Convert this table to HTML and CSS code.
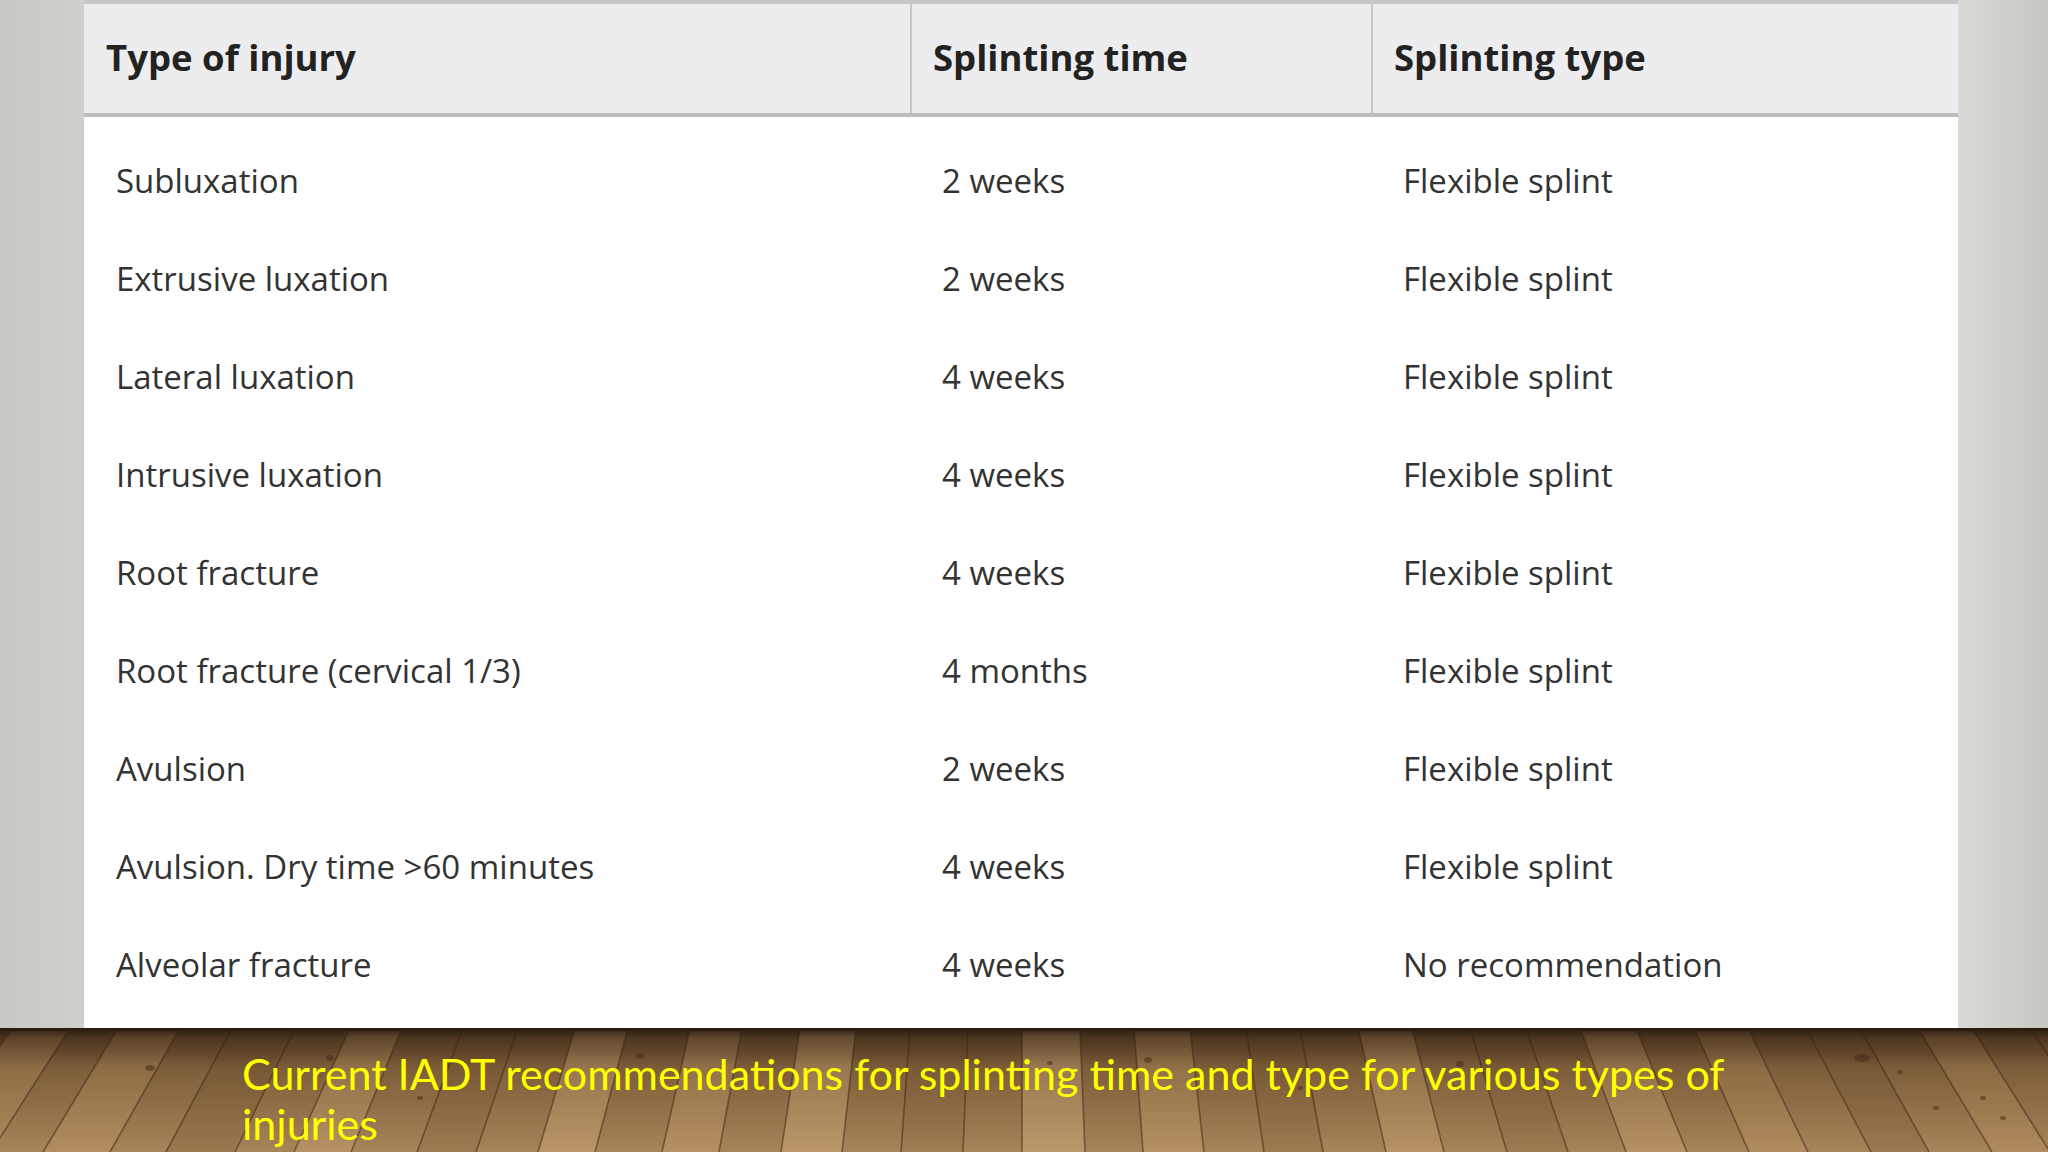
FILE: index.html
```html
<!DOCTYPE html>
<html lang="en">
<head>
<meta charset="utf-8">
<title>IADT splinting recommendations</title>
<link rel="stylesheet" href="styles.css">
</head>
<body>
<main class="slide">
  <section class="stage">
    <div class="table">
      <div class="thead">
        <div class="th">Type of injury</div>
        <div class="th">Splinting time</div>
        <div class="th">Splinting type</div>
      </div>
      <div class="tbody">
        <div class="tr"><div class="td">Subluxation</div><div class="td">2 weeks</div><div class="td">Flexible splint</div></div>
        <div class="tr"><div class="td">Extrusive luxation</div><div class="td">2 weeks</div><div class="td">Flexible splint</div></div>
        <div class="tr"><div class="td">Lateral luxation</div><div class="td">4 weeks</div><div class="td">Flexible splint</div></div>
        <div class="tr"><div class="td">Intrusive luxation</div><div class="td">4 weeks</div><div class="td">Flexible splint</div></div>
        <div class="tr"><div class="td">Root fracture</div><div class="td">4 weeks</div><div class="td">Flexible splint</div></div>
        <div class="tr"><div class="td">Root fracture (cervical 1/3)</div><div class="td">4 months</div><div class="td">Flexible splint</div></div>
        <div class="tr"><div class="td">Avulsion</div><div class="td">2 weeks</div><div class="td">Flexible splint</div></div>
        <div class="tr"><div class="td">Avulsion. Dry time &gt;60 minutes</div><div class="td">4 weeks</div><div class="td">Flexible splint</div></div>
        <div class="tr"><div class="td">Alveolar fracture</div><div class="td">4 weeks</div><div class="td">No recommendation</div></div>
      </div>
    </div>
  </section>
  <footer class="floor">
    <svg class="planks" viewBox="0 0 2048 124" preserveAspectRatio="none" aria-hidden="true">
      <defs>
        <linearGradient id="shade" x1="0" y1="0" x2="0" y2="1">
          <stop offset="0" stop-color="#1e140a" stop-opacity="0.85"/>
          <stop offset="0.08" stop-color="#2a1c10" stop-opacity="0.45"/>
          <stop offset="0.3" stop-color="#2a1c10" stop-opacity="0.12"/>
          <stop offset="1" stop-color="#2a1c10" stop-opacity="0"/>
        </linearGradient>
      </defs>
      <g class="alt">
        <polygon points="12,0 70,0 -9,124 -72,124" fill="#c9a06a" opacity="0.3"/>
        <polygon points="118,0 180,0 110,124 43,124" fill="#d2ab74" opacity="0.25"/>
        <polygon points="232,0 295,0 235,124 166,124" fill="#6a4a2a" opacity="0.2"/>
        <polygon points="350,0 402,0 351,124 294,124" fill="#d8b27c" opacity="0.3"/>
        <polygon points="463,0 518,0 476,124 417,124" fill="#6a4a2a" opacity="0.15"/>
        <polygon points="575,0 628,0 595,124 538,124" fill="#dcb884" opacity="0.35"/>
        <polygon points="690,0 742,0 719,124 662,124" fill="#d6b07a" opacity="0.3"/>
        <polygon points="800,0 856,0 842,124 781,124" fill="#e0bd88" opacity="0.35"/>
        <polygon points="910,0 968,0 963,124 901,124" fill="#6a4a2a" opacity="0.12"/>
        <polygon points="1022,0 1080,0 1085,124 1022,124" fill="#e2c08c" opacity="0.35"/>
        <polygon points="1134,0 1190,0 1204,124 1143,124" fill="#d4ae78" opacity="0.3"/>
        <polygon points="1246,0 1300,0 1323,124 1264,124" fill="#6a4a2a" opacity="0.15"/>
        <polygon points="1358,0 1412,0 1444,124 1386,124" fill="#dab680" opacity="0.3"/>
        <polygon points="1470,0 1526,0 1568,124 1507,124" fill="#6a4a2a" opacity="0.15"/>
        <polygon points="1580,0 1636,0 1687,124 1626,124" fill="#d6b07a" opacity="0.3"/>
        <polygon points="1694,0 1748,0 1808,124 1749,124" fill="#caa26c" opacity="0.25"/>
        <polygon points="1806,0 1860,0 1929,124 1871,124" fill="#6a4a2a" opacity="0.18"/>
        <polygon points="1918,0 1972,0 2050,124 1992,124" fill="#c9a06a" opacity="0.25"/>
      </g>
      <g class="seams" stroke="#3f2a16" stroke-width="1.6" stroke-opacity="0.55">
        <line x1="-60" y1="0" x2="-150" y2="124"/>
        <line x1="12" y1="0" x2="-72" y2="124"/>
        <line x1="70" y1="0" x2="-9" y2="124"/>
        <line x1="118" y1="0" x2="43" y2="124"/>
        <line x1="180" y1="0" x2="110" y2="124"/>
        <line x1="232" y1="0" x2="166" y2="124"/>
        <line x1="295" y1="0" x2="235" y2="124"/>
        <line x1="350" y1="0" x2="294" y2="124"/>
        <line x1="402" y1="0" x2="351" y2="124"/>
        <line x1="463" y1="0" x2="417" y2="124"/>
        <line x1="518" y1="0" x2="476" y2="124"/>
        <line x1="575" y1="0" x2="538" y2="124"/>
        <line x1="628" y1="0" x2="595" y2="124"/>
        <line x1="690" y1="0" x2="662" y2="124"/>
        <line x1="742" y1="0" x2="719" y2="124"/>
        <line x1="800" y1="0" x2="781" y2="124"/>
        <line x1="856" y1="0" x2="842" y2="124"/>
        <line x1="910" y1="0" x2="901" y2="124"/>
        <line x1="968" y1="0" x2="963" y2="124"/>
        <line x1="1022" y1="0" x2="1022" y2="124"/>
        <line x1="1080" y1="0" x2="1085" y2="124"/>
        <line x1="1134" y1="0" x2="1143" y2="124"/>
        <line x1="1190" y1="0" x2="1204" y2="124"/>
        <line x1="1246" y1="0" x2="1264" y2="124"/>
        <line x1="1300" y1="0" x2="1323" y2="124"/>
        <line x1="1358" y1="0" x2="1386" y2="124"/>
        <line x1="1412" y1="0" x2="1444" y2="124"/>
        <line x1="1470" y1="0" x2="1507" y2="124"/>
        <line x1="1526" y1="0" x2="1568" y2="124"/>
        <line x1="1580" y1="0" x2="1626" y2="124"/>
        <line x1="1636" y1="0" x2="1687" y2="124"/>
        <line x1="1694" y1="0" x2="1749" y2="124"/>
        <line x1="1748" y1="0" x2="1808" y2="124"/>
        <line x1="1806" y1="0" x2="1871" y2="124"/>
        <line x1="1860" y1="0" x2="1929" y2="124"/>
        <line x1="1918" y1="0" x2="1992" y2="124"/>
        <line x1="1972" y1="0" x2="2050" y2="124"/>
        <line x1="2030" y1="0" x2="2113" y2="124"/>
      </g>
      <g class="knots" fill="#4a3019" fill-opacity="0.55">
        <ellipse cx="150" cy="40" rx="5" ry="3"/>
        <ellipse cx="330" cy="30" rx="4" ry="3"/>
        <ellipse cx="420" cy="70" rx="3" ry="2"/>
        <ellipse cx="640" cy="28" rx="4" ry="3"/>
        <ellipse cx="1050" cy="35" rx="3" ry="2"/>
        <ellipse cx="1148" cy="32" rx="4" ry="3"/>
        <ellipse cx="1300" cy="60" rx="3" ry="2"/>
        <ellipse cx="1460" cy="36" rx="4" ry="3"/>
        <ellipse cx="1862" cy="30" rx="8" ry="4"/>
        <ellipse cx="1900" cy="44" rx="3" ry="2"/>
        <ellipse cx="1936" cy="80" rx="3" ry="2"/>
        <ellipse cx="1983" cy="70" rx="3" ry="2"/>
        <ellipse cx="2003" cy="90" rx="3" ry="2"/>
      </g>
      <rect x="0" y="0" width="2048" height="124" fill="url(#shade)"/>
      <rect x="0" y="0" width="2048" height="3" fill="#2b1d10"/>
    </svg>
    <p class="caption">Current IADT recommendations for splinting time and type for various types of injuries</p>
  </footer>
</main>
</body>
</html>
```

FILE: styles.css
```css
html, body {
  margin: 0;
  padding: 0;
}

body {
  width: 2048px;
  height: 1152px;
  overflow: hidden;
  background: #cfcfcb;
  font-family: "Open Sans", "Noto Sans", sans-serif;
}

.slide {
  width: 2048px;
  height: 1152px;
  display: grid;
  grid-template-rows: 1028px 124px;
}

.stage {
  display: flex;
  padding: 0 90px 0 84px;
  background: linear-gradient(90deg, #c8c8c4 0px, #cfcfcb 84px, #d9d9d5 1958px, #c6c6c2 2048px);
}

.table {
  flex: 1;
  display: flex;
  flex-direction: column;
  background: #ffffff;
}

.thead {
  display: grid;
  grid-template-columns: 826px 461px 1fr;
  height: 117px;
  box-sizing: border-box;
  background: #ededef;
  border-top: 4px solid #c6c6c8;
  border-bottom: 4px solid #bcbcbe;
}

.th {
  display: flex;
  align-items: center;
  box-sizing: border-box;
  padding-left: 22px;
  padding-bottom: 3px;
  font-size: 36.5px;
  font-weight: 700;
  color: #222222;
}

.th + .th {
  border-left: 2px solid #c8c8ca;
  padding-left: 21px;
}

.tbody {
  display: flex;
  flex-direction: column;
  padding: 14px 0 15px;
}

.tr {
  display: grid;
  grid-template-columns: 826px 461px 1fr;
  height: 98px;
  align-items: center;
}

.td {
  padding-left: 32px;
  font-size: 33px;
  color: #333333;
}

.floor {
  position: relative;
  overflow: hidden;
  background: linear-gradient(180deg, #5e4226 0%, #8a6840 35%, #a8845a 100%);
}

.planks {
  position: absolute;
  inset: 0;
  width: 100%;
  height: 100%;
}

.caption {
  position: relative;
  margin: 0;
  padding: 21px 0 0 242px;
  width: 1490px;
  font-family: Lato, "Open Sans", sans-serif;
  font-size: 43px;
  line-height: 50px;
  color: #ffff00;
}
```
